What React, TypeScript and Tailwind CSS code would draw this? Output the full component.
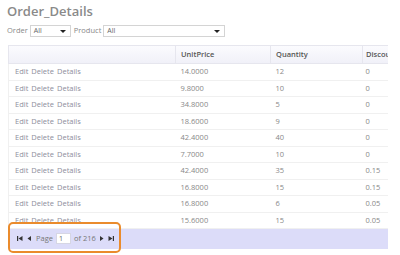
const rows = [
  ['14.0000', '12', '0'],
  ['9.8000', '10', '0'],
  ['34.8000', '5', '0'],
  ['18.6000', '9', '0'],
  ['42.4000', '40', '0'],
  ['7.7000', '10', '0'],
  ['42.4000', '35', '0.15'],
  ['16.8000', '15', '0.15'],
  ['16.8000', '6', '0.05'],
  ['15.6000', '15', '0.05'],
]

function Select({ width }: { width: string }) {
  return (
    <div className={`${width} h-[12px] border border-[#d4d4d4] bg-white flex items-center justify-between pl-[3px] pr-[4px] text-[7px] text-[#666]`}>
      <span>All</span>
      <span className="w-0 h-0 border-l-[3px] border-r-[3px] border-t-[3px] border-l-transparent border-r-transparent border-t-[#222]" />
    </div>
  )
}

export default function App() {
  return (
    <div className="relative w-[400px] h-[255px] bg-white overflow-hidden font-['Open_Sans',sans-serif] text-[#888]">
      <h1 className="pl-[7px] pt-[2px] text-[13px] leading-[18px] font-semibold text-[#8a8a8a]">Order_Details</h1>
      <div className="flex items-center pl-[7px] mt-[5px] gap-[2px] text-[7.5px]">
        <span>Order</span>
        <Select width="w-[41px]" />
        <span className="ml-[1px]">Product</span>
        <Select width="w-[122px]" />
      </div>
      <div className="relative ml-[8px] mt-[8px] w-[380px] overflow-hidden">
        <table className="w-[400px] border-collapse text-[7.5px] table-fixed">
          <colgroup>
            <col className="w-[167px]" />
            <col className="w-[95px]" />
            <col className="w-[92px]" />
            <col className="w-[46px]" />
          </colgroup>
          <thead>
            <tr className="h-[18px] bg-gradient-to-b from-[#fbfbfe] to-[#f0f0f8] text-[#555]">
              <th className="border border-[#e6e6ee]" />
              <th className="border border-[#e6e6ee] text-left pl-[5px] font-semibold">UnitPrice</th>
              <th className="border border-[#e6e6ee] text-left pl-[5px] font-semibold">Quantity</th>
              <th className="border-y border-l border-[#e6e6ee] text-left pl-[3px] font-semibold whitespace-nowrap">Discount</th>
            </tr>
          </thead>
          <tbody>
            {rows.map((r, i) => (
              <tr key={i} className="h-[16.5px] border-b border-[#f0f0f0]">
                <td className="pl-[6px] border-l border-[#f0f0f0] text-[#8e8e9c]">
                  <span>Edit</span>
                  <span className="ml-[3px]">Delete</span>
                  <span className="ml-[3px]">Details</span>
                </td>
                <td className="pl-[5px]">{r[0]}</td>
                <td className="pl-[5px]">{r[1]}</td>
                <td className="pl-[3px]">{r[2]}</td>
              </tr>
            ))}
            <tr className="h-[20px] bg-[#dcdcf9]">
              <td colSpan={4} />
            </tr>
          </tbody>
        </table>
        <div className="absolute left-0 bottom-[0px] h-[20px] flex items-center pl-[9px] gap-[3px] text-[7.5px] text-[#777]">
          <svg width="6" height="7" viewBox="0 0 6 7"><rect x="0" y="1" width="1.2" height="5" fill="#333" /><path d="M5.5 1 L1.5 3.5 L5.5 6 Z" fill="#333" /></svg>
          <svg width="5" height="7" viewBox="0 0 5 7" className="ml-[1px]"><path d="M4 1 L0.5 3.5 L4 6 Z" fill="#333" /></svg>
          <span className="ml-[1px]">Page</span>
          <div className="w-[15px] h-[11px] bg-white border border-[#d6d6e4] text-[7px] leading-[9px] pl-[2px] text-[#666]">1</div>
          <span>of 216</span>
          <svg width="5" height="7" viewBox="0 0 5 7"><path d="M1 1 L4.5 3.5 L1 6 Z" fill="#333" /></svg>
          <svg width="6" height="7" viewBox="0 0 6 7" className="ml-[1px]"><path d="M0.5 1 L4.5 3.5 L0.5 6 Z" fill="#333" /><rect x="4.8" y="1" width="1.2" height="5" fill="#333" /></svg>
        </div>
      </div>
      <div className="absolute left-[8px] top-[222px] w-[113px] h-[31px] border-2 border-[#ea8b2c] rounded-[5px] pointer-events-none" />
    </div>
  )
}
